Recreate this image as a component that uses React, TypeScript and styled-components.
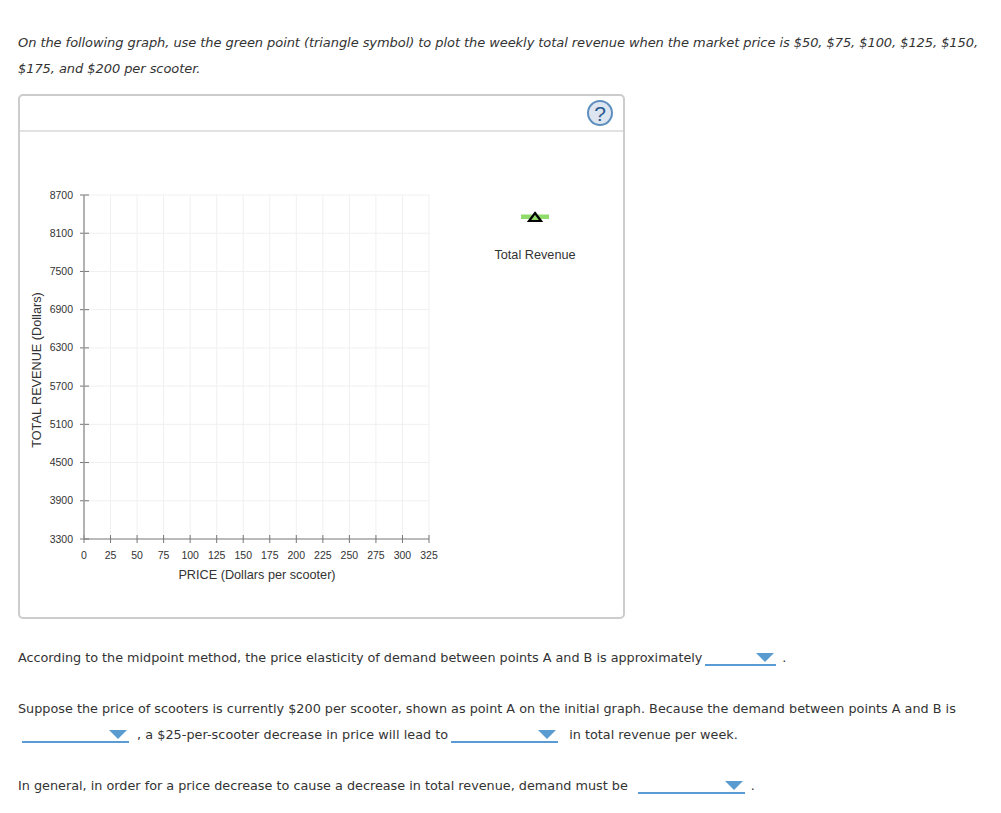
import styled, { createGlobalStyle } from "styled-components";

const GlobalStyle = createGlobalStyle`
    html, body {
        margin: 0;
        padding: 0;
        background: #fff;
    }
`;

const yLabels = [8700, 8100, 7500, 6900, 6300, 5700, 5100, 4500, 3900, 3300];
const xLabels = [0, 25, 50, 75, 100, 125, 150, 175, 200, 225, 250, 275, 300, 325];

const LEFT = 84;
const RIGHT = 429;
const TOP = 195;
const BOTTOM = 539;
const xAt = (i: number) => LEFT + (i * (RIGHT - LEFT)) / 13;
const yAt = (i: number) => TOP + (i * (BOTTOM - TOP)) / 9;

const Chart = () => (
    <ChartSvg viewBox="20 132 450 484">
        {xLabels.map((label, i) => (
            <g key={label}>
                {i > 0 && <line x1={xAt(i)} y1={TOP} x2={xAt(i)} y2={BOTTOM} stroke="#f0f0f0" />}
                <line x1={xAt(i)} y1={BOTTOM - 4} x2={xAt(i)} y2={BOTTOM + 4} stroke="#777" />
                <text x={xAt(i)} y={559} fontSize="10.5" textAnchor="middle" fill="#333">{label}</text>
            </g>
        ))}
        {yLabels.map((label, i) => (
            <g key={label}>
                {i < 9 && <line x1={LEFT} y1={yAt(i)} x2={RIGHT} y2={yAt(i)} stroke="#f0f0f0" />}
                <line x1={LEFT - 4} y1={yAt(i)} x2={LEFT + 5} y2={yAt(i)} stroke="#777" />
                <text x={73} y={yAt(i) + 3.5} fontSize="10.5" textAnchor="end" fill="#333">{label}</text>
            </g>
        ))}
        <line x1={LEFT} y1={TOP} x2={LEFT} y2={BOTTOM} stroke="#999" strokeWidth="1.5" />
        <line x1={LEFT} y1={BOTTOM} x2={RIGHT} y2={BOTTOM} stroke="#777" strokeWidth="1.2" />
        <text x={257} y={579} fontSize="12.7" textAnchor="middle" fill="#333">PRICE (Dollars per scooter)</text>
        <text
            transform="translate(41 370) rotate(-90)"
            fontSize="12.7"
            textAnchor="middle"
            fill="#333"
        >
            TOTAL REVENUE (Dollars)
        </text>
    </ChartSvg>
);

export default function App() {
    return (
        <Page>
            <GlobalStyle />
            <Intro>
                On the following graph, use the green point (triangle symbol) to plot the weekly total revenue when the market price is $50, $75, $100, $125, $150,
                <br />
                $175, and $200 per scooter.
            </Intro>
            <Panel>
                <PanelHeader>
                    <HelpButton>?</HelpButton>
                </PanelHeader>
                <PanelBody>
                    <Chart />
                    <Legend>
                        <svg width="30" height="14" viewBox="0 0 30 14">
                            <rect x="1" y="4.5" width="28" height="4.5" fill="#8fdc6a" />
                            <polygon points="15,3 21,11 9,11" fill="#8fdc6a" stroke="#000" strokeWidth="2.2" />
                        </svg>
                        <LegendLabel>Total Revenue</LegendLabel>
                    </Legend>
                </PanelBody>
            </Panel>
            <QuestionOne>
                According to the midpoint method, the price elasticity of demand between points A and B is approximately
                <Select $width={71} $gap={3} />
                <Dot>.</Dot>
            </QuestionOne>
            <QuestionTwo>
                Suppose the price of scooters is currently $200 per scooter, shown as point A on the initial graph. Because the demand between points A and B is
                <br />
                <Select $width={107} $gap={4} />
                <Tail>, a $25-per-scooter decrease in price will lead to</Tail>
                <Select $width={107} $gap={3} />
                <After>in total revenue per week.</After>
            </QuestionTwo>
            <QuestionThree>
                In general, in order for a price decrease to cause a decrease in total revenue, demand must be
                <Select $width={107} $gap={10} />
                <Dot>.</Dot>
            </QuestionThree>
        </Page>
    );
}

const Select = ({ $width, $gap }: { $width: number; $gap: number }) => (
    <Dropdown $width={$width} $gap={$gap}>
        <Arrow />
    </Dropdown>
);

const Page = styled.div`
    width: 1001px;
    height: 813px;
    box-sizing: border-box;
    padding: 30px 0 0 18px;
    overflow: hidden;
    font-family: "DejaVu Sans", Verdana, sans-serif;
    font-size: 12.8px;
    color: #333;
`;
const Intro = styled.p`
    margin: 0;
    font-size: 13px;
    font-style: italic;
    letter-spacing: -0.065px;
    line-height: 26px;
    white-space: nowrap;
`;
const Panel = styled.div`
    margin-top: 12px;
    width: 607px;
    height: 525px;
    box-sizing: border-box;
    border: 2px solid #ccc;
    border-radius: 5px;
`;
const PanelHeader = styled.div`
    height: 34px;
    box-sizing: content-box;
    border-bottom: 2px solid #e2e2e2;
    display: flex;
    justify-content: flex-end;
    align-items: center;
    padding-right: 10px;
`;
const HelpButton = styled.div`
    width: 22px;
    height: 22px;
    border: 2px solid #5f8fbf;
    border-radius: 50%;
    background: #dde6f0;
    color: #285a8e;
    font-family: "Liberation Sans", Arial, sans-serif;
    font-size: 21px;
    line-height: 23px;
    text-align: center;
`;
const PanelBody = styled.div`
    display: flex;
`;
const ChartSvg = styled.svg`
    display: block;
    width: 450px;
    height: 484px;
    flex: none;
    font-family: "Liberation Sans", Arial, sans-serif;
`;
const Legend = styled.div`
    width: 130px;
    padding-top: 78px;
    display: flex;
    flex-direction: column;
    align-items: center;
`;
const LegendLabel = styled.div`
    margin-top: 23px;
    font-family: "Liberation Sans", Arial, sans-serif;
    font-size: 12.7px;
    line-height: 16px;
`;
const QuestionOne = styled.p`
    margin: 26px 0 0;
    letter-spacing: -0.02px;
    line-height: 26px;
    white-space: nowrap;
`;
const QuestionTwo = styled.p`
    margin: 25px 0 0;
    line-height: 26px;
    white-space: nowrap;
`;
const QuestionThree = styled.p`
    margin: 25px 0 0;
    line-height: 26px;
    white-space: nowrap;
`;
const Dropdown = styled.span<{ $width: number; $gap: number }>`
    display: inline-flex;
    justify-content: flex-end;
    align-items: flex-start;
    box-sizing: border-box;
    width: ${(p) => p.$width}px;
    height: 13px;
    margin-left: ${(p) => p.$gap}px;
    padding-right: 2px;
    border-bottom: 2px solid #5b9bd5;
    vertical-align: 0;
`;
const Arrow = styled.span`
    width: 0;
    height: 0;
    border-left: 9px solid transparent;
    border-right: 9px solid transparent;
    border-top: 9px solid #5a9bd0;
`;
const Dot = styled.span`
    margin-left: 6px;
`;
const Tail = styled.span`
    margin-left: 8px;
    letter-spacing: 0.04px;
`;
const After = styled.span`
    margin-left: 11px;
`;
